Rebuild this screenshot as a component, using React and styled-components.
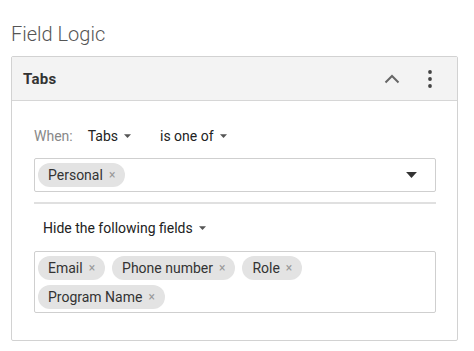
import React from "react";
import styled, { createGlobalStyle } from "styled-components";

const GlobalStyle = createGlobalStyle`
  body {
    margin: 0;
    background: #ffffff;
    font-family: Roboto, "Liberation Sans", sans-serif;
  }
`;

function Caret({ size = 7, color = "#555" }) {
  return (
    <svg width={size} height={size / 2 + 1} viewBox="0 0 10 6">
      <path d="M0 0 L10 0 L5 5.5 Z" fill={color} />
    </svg>
  );
}

function Chip({ label }) {
  return (
    <ChipBox>
      {label}
      <ChipClose>×</ChipClose>
    </ChipBox>
  );
}

function App() {
  return (
    <Page>
      <GlobalStyle />
      <Title>Field Logic</Title>
      <Card>
        <CardHeader>
          <HeaderTitle>Tabs</HeaderTitle>
          <HeaderActions>
            <IconButton>
              <svg width="18" height="12" viewBox="0 0 18 12">
                <path d="M2.5 9.5 L9 3 L15.5 9.5" fill="none" stroke="#666" strokeWidth="2" />
              </svg>
            </IconButton>
            <IconButton>
              <svg width="6" height="20" viewBox="0 0 6 20">
                <circle cx="3" cy="3" r="1.9" fill="#444" />
                <circle cx="3" cy="10" r="1.9" fill="#444" />
                <circle cx="3" cy="17" r="1.9" fill="#444" />
              </svg>
            </IconButton>
          </HeaderActions>
        </CardHeader>
        <CardBody>
          <ConditionRow>
            <Label>When:</Label>
            <Dropdown>
              Tabs <Caret />
            </Dropdown>
            <Dropdown $spaced>
              is one of <Caret />
            </Dropdown>
          </ConditionRow>
          <SelectBox>
            <ChipList>
              <Chip label="Personal" />
            </ChipList>
            <SelectArrow>
              <Caret size={11} color="#333" />
            </SelectArrow>
          </SelectBox>
          <Divider />
          <ActionRow>
            <Dropdown>
              Hide the following fields <Caret />
            </Dropdown>
          </ActionRow>
          <MultiBox>
            <Chip label="Email" />
            <Chip label="Phone number" />
            <Chip label="Role" />
            <Chip label="Program Name" />
          </MultiBox>
        </CardBody>
      </Card>
    </Page>
  );
}

export default App;

const Page = styled.div`
  padding: 22px 16px 0 11px;
  width: 447px;
`;

const Title = styled.div`
  font-size: 20px;
  line-height: 24px;
  color: #555;
  font-weight: 300;
  margin-bottom: 10px;
`;

const Card = styled.div`
  border: 1px solid #d2d2d2;
  border-radius: 2px;
  background: #fff;
`;

const CardHeader = styled.div`
  height: 43px;
  background: #f3f3f3;
  border-bottom: 1px solid #d6d6d6;
  display: flex;
  align-items: center;
  justify-content: space-between;
  padding: 0 24px 0 11px;
`;

const HeaderTitle = styled.div`
  font-size: 15px;
  font-weight: 700;
  color: #333;
  letter-spacing: 0.3px;
`;

const HeaderActions = styled.div`
  display: flex;
  align-items: center;
  gap: 26px;
`;

const IconButton = styled.div`
  display: flex;
  align-items: center;
  justify-content: center;
`;

const CardBody = styled.div`
  padding: 23px 21px 27px 22px;
`;

const ConditionRow = styled.div`
  display: flex;
  align-items: center;
  height: 24px;
  font-size: 14px;
  margin-bottom: 10px;
`;

const Label = styled.span`
  color: #888;
  margin-right: 15px;
`;

const Dropdown = styled.span`
  display: inline-flex;
  align-items: center;
  gap: 6px;
  color: #222;
  font-size: 14px;
  margin-left: ${(p) => (p.$spaced ? "29px" : "0")};
`;

const SelectBox = styled.div`
  display: flex;
  align-items: center;
  justify-content: space-between;
  border: 1px solid #cfcfcf;
  border-radius: 2px;
  padding: 4px 18px 4px 3px;
`;

const ChipList = styled.div`
  display: flex;
  flex-wrap: wrap;
  gap: 5px 7px;
`;

const SelectArrow = styled.div`
  display: flex;
  align-items: center;
`;

const ChipBox = styled.span`
  display: inline-flex;
  align-items: center;
  height: 24px;
  border-radius: 12px;
  background: #e3e3e3;
  padding: 0 10px;
  font-size: 14px;
  color: #333;
`;

const ChipClose = styled.span`
  color: #999;
  font-size: 12px;
  margin-left: 6px;
`;

const Divider = styled.div`
  height: 2px;
  background: #e0e0e0;
  margin: 10px 0 12px;
`;

const ActionRow = styled.div`
  display: flex;
  align-items: center;
  height: 24px;
  padding-left: 9px;
  margin-bottom: 11px;
`;

const MultiBox = styled.div`
  display: flex;
  flex-wrap: wrap;
  gap: 5px 7px;
  border: 1px solid #cfcfcf;
  border-radius: 2px;
  padding: 4px 3px 3px;
`;
